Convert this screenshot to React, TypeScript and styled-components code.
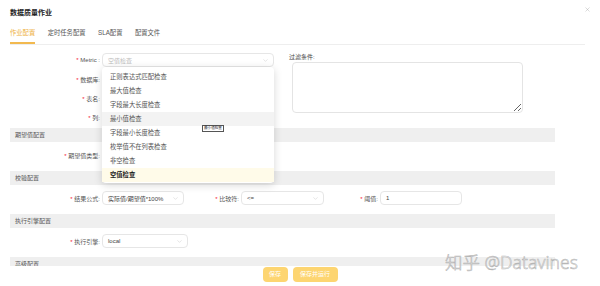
import styled, { createGlobalStyle } from "styled-components";
import { ChevronDown, X } from "lucide-react";

const GlobalStyle = createGlobalStyle`
  html, body {
    margin: 0;
    padding: 0;
    background: #fff;
  }
  body {
    font-family: "Liberation Sans", "Noto Sans CJK SC", sans-serif;
  }
`;

const Modal = styled.div`
  position: relative;
  width: 600px;
  height: 286px;
  display: flex;
  flex-direction: column;
  background: #fff;
  overflow: hidden;
`;

const Header = styled.div`
  display: flex;
  align-items: center;
  justify-content: space-between;
  height: 18px;
  padding: 3px 9px 0 10px;
`;

const Title = styled.div`
  font-size: 7px;
  font-weight: bold;
  color: #222;
`;

const CloseBtn = styled.span`
  display: flex;
  color: #999;
  margin-top: -6px;
`;

const Tabs = styled.div`
  display: flex;
  gap: 12.5px;
  margin: 0 15px 0 10px;
  height: 23px;
  border-bottom: 1px solid #eee;
`;

const Tab = styled.div<{ $active?: boolean }>`
  display: flex;
  align-items: center;
  font-size: 6.3px;
  color: ${({ $active }) => ($active ? "#eeb03c" : "#555")};
  border-bottom: 2px solid ${({ $active }) => ($active ? "#f2b94f" : "transparent")};
  padding-top: 2px;
  box-sizing: border-box;
`;

const Body = styled.div`
  flex: 1;
  overflow: hidden;
  padding: 8px 45px 0 10px;
`;

const TopGrid = styled.div`
  display: flex;
  gap: 15px;
`;

const LeftCol = styled.div`
  width: 264px;
  display: flex;
  flex-direction: column;
  gap: 5px;
`;

const RightCol = styled.div`
  display: flex;
  flex-direction: column;
  gap: 1px;
`;

const FilterLabel = styled.div`
  font-size: 6px;
  color: #444;
  height: 8px;
  line-height: 8px;
`;

const TextArea = styled.textarea`
  width: 231px;
  height: 51px;
  margin-left: 3px;
  box-sizing: border-box;
  border: 1px solid #e4e4e4;
  border-radius: 4px;
  outline: none;
`;

const Row = styled.div`
  display: flex;
  align-items: center;
  gap: 2px;
  height: 14px;
`;

const Label = styled.div<{ $w: number }>`
  width: ${({ $w }) => $w}px;
  text-align: right;
  font-size: 6px;
  color: #555;
  white-space: nowrap;
  &::before {
    content: "* ";
    color: #f5222d;
  }
`;

const SelectBox = styled.div<{ $w: number }>`
  position: relative;
  width: ${({ $w }) => $w}px;
  height: 14px;
  box-sizing: border-box;
  border: 1px solid #e6e6e6;
  border-radius: 4px;
  display: flex;
  align-items: center;
  justify-content: space-between;
  padding: 0 4px 0 5px;
  font-size: 6px;
  color: #444;
  background: #fff;
`;

const Placeholder = styled.span`
  color: #bbb;
`;

const Dropdown = styled.div`
  position: absolute;
  z-index: 5;
  top: 13px;
  left: -1px;
  width: 172px;
  padding: 3px 0 1px;
  background: #fff;
  border-radius: 4px;
  box-shadow: 0 2px 8px rgba(0, 0, 0, 0.16);
`;

const Option = styled.div<{ $hover?: boolean; $selected?: boolean }>`
  height: 14px;
  line-height: 14px;
  padding-left: 8px;
  font-size: 6.3px;
  color: ${({ $selected }) => ($selected ? "#222" : "#555")};
  font-weight: ${({ $selected }) => ($selected ? "bold" : "normal")};
  background: ${({ $hover, $selected }) =>
    $selected ? "#fffbe9" : $hover ? "#f3f3f3" : "transparent"};
`;

const Tip = styled.div`
  position: absolute;
  left: 100px;
  top: 58px;
  padding: 0 1px;
  border: 0.5px solid #555;
  background: #fff;
  font-size: 3.6px;
  line-height: 5px;
  color: #222;
  white-space: nowrap;
`;

const Section = styled.div`
  margin-top: 4px;
  display: flex;
  flex-direction: column;
  gap: 6px;
  padding-bottom: 5px;
`;

const SectionBar = styled.div`
  height: 14px;
  line-height: 14px;
  background: #efefef;
  padding-left: 5px;
  font-size: 6px;
  color: #555;
`;

const Footer = styled.div`
  height: 19px;
  display: flex;
  justify-content: center;
  align-items: flex-start;
  gap: 5px;
  background: #fff;
  padding-top: 1px;
`;

const Button = styled.div<{ $w: number }>`
  width: ${({ $w }) => $w}px;
  height: 15px;
  line-height: 15px;
  text-align: center;
  border-radius: 4px;
  background: #fdd571;
  color: #fff;
  font-size: 6px;
`;

const Watermark = styled.div`
  position: absolute;
  left: 445px;
  top: 249px;
  font-family: "Noto Sans", "Noto Sans CJK SC", sans-serif;
  font-size: 17.5px;
  font-weight: 300;
  color: rgba(255, 255, 255, 0.9);
  -webkit-text-stroke: 0.6px rgba(150, 150, 150, 0.7);
  white-space: nowrap;
`;

const options = [
  "正则表达式匹配检查",
  "最大值检查",
  "字段最大长度检查",
  "最小值检查",
  "字段最小长度检查",
  "枚举值不在列表检查",
  "非空检查",
  "空值检查",
];

function Select({ w, value, placeholder, children }: { w: number; value?: string; placeholder?: string; children?: React.ReactNode }) {
  return (
    <SelectBox $w={w}>
      {value ? <span>{value}</span> : <Placeholder>{placeholder}</Placeholder>}
      <ChevronDown size={7} strokeWidth={1.3} color="#bbb" />
      {children}
    </SelectBox>
  );
}

export default function App() {
  return (
    <Modal>
      <GlobalStyle />
      <Header>
        <Title>数据质量作业</Title>
        <CloseBtn>
          <X size={7} strokeWidth={1.2} />
        </CloseBtn>
      </Header>
      <Tabs>
        <Tab $active>作业配置</Tab>
        <Tab>定时任务配置</Tab>
        <Tab>SLA配置</Tab>
        <Tab>配置文件</Tab>
      </Tabs>
      <Body>
        <TopGrid>
          <LeftCol>
            <Row>
              <Label $w={90}>Metric :</Label>
              <Select w={172} placeholder="空值检查">
                <Dropdown>
                  {options.map((o) => (
                    <Option key={o} $hover={o === "最小值检查"} $selected={o === "空值检查"}>
                      {o}
                    </Option>
                  ))}
                  <Tip>最小值检查</Tip>
                </Dropdown>
              </Select>
            </Row>
            <Row>
              <Label $w={90}>数据库:</Label>
              <Select w={172} />
            </Row>
            <Row>
              <Label $w={90}>表名:</Label>
              <Select w={172} />
            </Row>
            <Row>
              <Label $w={90}>列:</Label>
              <Select w={172} />
            </Row>
          </LeftCol>
          <RightCol>
            <FilterLabel>过滤条件:</FilterLabel>
            <TextArea />
          </RightCol>
        </TopGrid>
        <Section>
          <SectionBar>期望值配置</SectionBar>
          <Row>
            <Label $w={90}>期望值类型:</Label>
            <Select w={172} />
          </Row>
        </Section>
        <Section>
          <SectionBar>校验配置</SectionBar>
          <Row>
            <Label $w={90}>结果公式:</Label>
            <Select w={82} value="实际值/期望值*100%" />
            <Label $w={53}>比较符:</Label>
            <Select w={83} value="<=" />
            <Label $w={52}>阈值:</Label>
            <SelectBox $w={82}>1</SelectBox>
          </Row>
        </Section>
        <Section>
          <SectionBar>执行引擎配置</SectionBar>
          <Row>
            <Label $w={90}>执行引擎:</Label>
            <Select w={86} value="local" />
          </Row>
        </Section>
        <Section>
          <SectionBar>高级配置</SectionBar>
        </Section>
      </Body>
      <Footer>
        <Button $w={25}>保存</Button>
        <Button $w={45}>保存并运行</Button>
      </Footer>
      <Watermark>知乎 @Datavines</Watermark>
    </Modal>
  );
}
